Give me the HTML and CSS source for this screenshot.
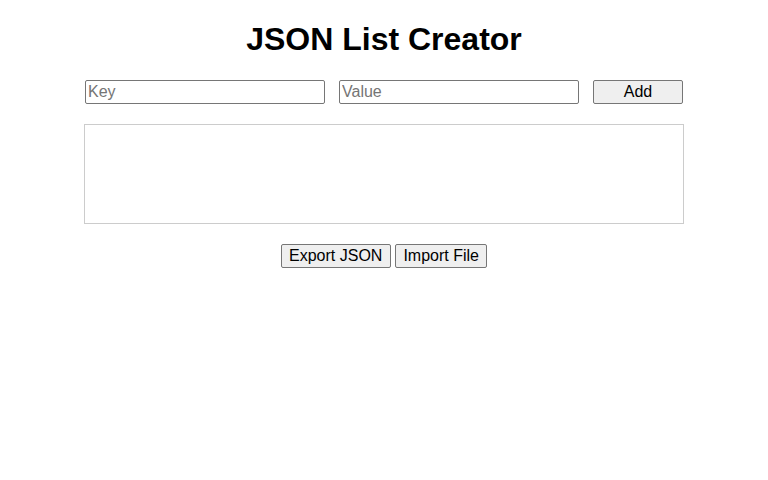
FILE: index.html
```html
<!DOCTYPE html>
<html>
<head>
<meta charset="utf-8">
<title>JSON List Creator</title>
<link rel="stylesheet" href="styles.css">
</head>
<body>
<div class="container">
  <h1 class="title">JSON List Creator</h1>
  <div class="entry-row">
    <input class="field" type="text" placeholder="Key">
    <input class="field" type="text" placeholder="Value">
    <button class="btn btn-add">Add</button>
  </div>
  <div class="list-box"></div>
  <div class="actions">
    <button class="btn btn-action">Export JSON</button>
    <button class="btn btn-action">Import File</button>
  </div>
</div>
</body>
</html>
```
FILE: styles.css
```css
body {
  margin: 0;
  padding: 0 8px;
  font-family: "Liberation Sans", Arial, sans-serif;
  background: #fff;
  color: #000;
}
.container {
  width: 600px;
  margin: 0 auto;
  padding-top: 21px;
}
.title {
  font-size: 32px;
  font-weight: bold;
  text-align: center;
  margin: 0 0 22px;
  line-height: 37px;
}
.entry-row {
  display: flex;
  justify-content: center;
  gap: 14px;
}
.field {
  width: 240px;
  height: 24px;
  box-sizing: border-box;
  border: 1px solid #767676;
  border-radius: 2px;
  padding: 1px 2px;
  font-family: "Liberation Sans", Arial, sans-serif;
  font-size: 16px;
  color: #000;
  background: #fff;
}
.field::placeholder {
  color: #757575;
}
.btn {
  height: 24px;
  box-sizing: border-box;
  border: 1px solid #767676;
  border-radius: 2px;
  background: #efefef;
  font-family: "Liberation Sans", Arial, sans-serif;
  font-size: 16px;
  color: #000;
  padding: 1px 6px;
}
.btn-add {
  width: 90px;
}
.btn-action {
  padding: 1px 7.5px;
}
.list-box {
  margin-top: 20px;
  height: 100px;
  box-sizing: border-box;
  border: 1px solid #ccc;
}
.actions {
  margin-top: 20px;
  display: flex;
  justify-content: center;
  gap: 4px;
}
```
